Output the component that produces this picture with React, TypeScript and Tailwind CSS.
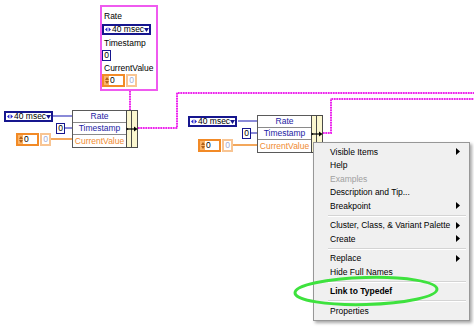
import React from "react";

const font = { fontFamily: '"Liberation Sans", Arial, sans-serif' };

function EnumConst() {
  return (
    <div className="flex h-[11px] w-[49px] items-center border-2 border-[#16168e] bg-white">
      <svg width="6" height="5" viewBox="0 0 6 5" className="ml-[1px] shrink-0">
        <path d="M0 2.5 L2.4 0.3 L2.4 4.7 Z M6 2.5 L3.6 0.3 L3.6 4.7 Z" fill="#2a2ad0" />
      </svg>
      <span className="ml-[1px] whitespace-nowrap text-[8.5px] leading-none text-black">40 msec</span>
      <svg width="5" height="4" viewBox="0 0 5 4" className="ml-auto mr-[1px] shrink-0">
        <path d="M0 0 H5 L2.5 4 Z" fill="#16168e" />
      </svg>
    </div>
  );
}

function ZeroConst() {
  return (
    <div className="flex h-[11px] w-[9px] items-center justify-center border-[1.5px] border-[#16168e] bg-white text-[8.5px] leading-none text-black">
      0
    </div>
  );
}

function OrangeNumeric() {
  return (
    <div className="flex items-center gap-[1px]">
      <div className="flex h-[13px] w-[23px] border-2 border-[#f28a26] bg-white">
        <div className="flex w-[5px] flex-col items-center justify-center gap-[1px] bg-[#fbb468]">
          <svg width="4" height="3" viewBox="0 0 4 3">
            <path d="M0 3 L2 0 L4 3 Z" fill="#b0601a" />
          </svg>
          <svg width="4" height="3" viewBox="0 0 4 3">
            <path d="M0 0 L2 3 L4 0 Z" fill="#b0601a" />
          </svg>
        </div>
        <div className="flex flex-1 items-center pl-[1px] text-[8.5px] leading-none text-black">0</div>
      </div>
      <div className="flex h-[13px] w-[11px] items-center justify-center border-2 border-[#f8c492] bg-white text-[8.5px] leading-none text-[#a4acd6]">
        0
      </div>
    </div>
  );
}

function Bundle({ left, top }: { left: number; top: number }) {
  const rows = [
    { label: "Rate", color: "text-[#1c1ca4]" },
    { label: "Timestamp", color: "text-[#1c1ca4]" },
    { label: "CurrentValue", color: "text-[#f08a30]" },
  ];
  return (
    <div className="absolute flex" style={{ left, top }}>
      <div className="flex w-[55px] flex-col border border-[#5a5a5a] bg-white">
        {rows.map((r, i) => (
          <div
            key={r.label}
            className={`flex h-[12px] items-center justify-center text-[8.5px] leading-none ${r.color} ${
              i < 2 ? "border-b border-[#8a8a8a]" : ""
            }`}
          >
            {r.label}
          </div>
        ))}
      </div>
      <div className="relative -ml-[1px] flex h-[38px] w-[12px] border border-[#4a4a4a] bg-[#fbf7cf]">
        <div className="ml-[4px] h-full w-[1px] bg-[#4a4a4a]" />
        <svg width="12" height="6" viewBox="0 0 12 6" className="absolute left-[-1px] top-[15px]">
          <path d="M1 3 H9" stroke="#000" strokeWidth="1.2" />
          <path d="M8 0.5 L11.5 3 L8 5.5 Z" fill="#000" />
          <path d="M0.5 1.5 L2.5 3 L0.5 4.5 Z" fill="#000" />
        </svg>
      </div>
    </div>
  );
}

function MenuItem({ label, arrow, disabled, bold }: { label: string; arrow?: boolean; disabled?: boolean; bold?: boolean }) {
  return (
    <div
      className={`flex h-[13.5px] items-center pl-[16px] pr-[9px] text-[8.5px] leading-none ${
        disabled ? "text-[#a0a0a0]" : "text-black"
      } ${bold ? "font-bold" : ""}`}
    >
      <span>{label}</span>
      {arrow && (
        <svg width="4" height="7" viewBox="0 0 4 7" className="ml-auto">
          <path d="M0 0 L4 3.5 L0 7 Z" fill="#000" />
        </svg>
      )}
    </div>
  );
}

function Sep() {
  return (
    <div className="flex h-[6px] items-center pl-[14px] pr-[3px]">
      <div className="h-[2px] w-full border-t border-[#d4d4d4] bg-white" />
    </div>
  );
}

export default function App() {
  return (
    <div className="relative h-[327px] w-[474px] overflow-hidden bg-white" style={font}>
      {/* wires */}
      <svg width="474" height="327" className="absolute left-0 top-0">
        <g fill="none" strokeWidth="2">
          <path d="M130 91 V110 M138 128 H177 V93 H474 M323 133 H331 V99 H474" stroke="#f7b8f7" />
          <path d="M130 91 V110 M138 128 H177 V93 H474 M323 133 H331 V99 H474" stroke="#ee22ee" strokeDasharray="1.5 1" />
        </g>
        <g fill="none" strokeWidth="1.5">
          <path d="M53 116 H72 M64 128 H72 M238 121 H257 M250 133 H257" stroke="#6464cc" />
          <path d="M51 139 H72 M233 145 H257" stroke="#f08a26" />
        </g>
      </svg>

      {/* cluster constant */}
      <div className="absolute left-[100px] top-[5px] flex h-[86px] w-[58px] flex-col border-2 border-[#ef5aef] pt-[3px]">
        <div className="ml-[2px] h-[12px] text-[8.5px] leading-[12px] text-black">Rate</div>
        <div className="mt-[2px]">
          <EnumConst />
        </div>
        <div className="ml-[2px] mt-[2px] h-[12px] text-[8.5px] leading-[12px] text-black">Timestamp</div>
        <div className="mt-[1px]">
          <ZeroConst />
        </div>
        <div className="ml-[2px] mt-[1px] h-[12px] text-[8.5px] leading-[12px] text-black">CurrentValue</div>
        <OrangeNumeric />
      </div>

      {/* left group */}
      <div className="absolute left-[4px] top-[111px]">
        <EnumConst />
      </div>
      <div className="absolute left-[56px] top-[123px]">
        <ZeroConst />
      </div>
      <div className="absolute left-[16px] top-[133px]">
        <OrangeNumeric />
      </div>
      <Bundle left={72} top={110} />

      {/* right group */}
      <div className="absolute left-[188px] top-[116px]">
        <EnumConst />
      </div>
      <div className="absolute left-[242px] top-[128px]">
        <ZeroConst />
      </div>
      <div className="absolute left-[198px] top-[139px]">
        <OrangeNumeric />
      </div>
      <Bundle left={257} top={115} />

      {/* context menu */}
      <div className="absolute left-[313px] top-[142px] flex w-[157px] flex-col border border-[#979797] bg-[#f0f0f0] py-[2px] shadow-[2px_2px_3px_rgba(0,0,0,0.35)]">
        <MenuItem label="Visible Items" arrow />
        <MenuItem label="Help" />
        <MenuItem label="Examples" disabled />
        <MenuItem label="Description and Tip..." />
        <MenuItem label="Breakpoint" arrow />
        <Sep />
        <MenuItem label="Cluster, Class, & Variant Palette" arrow />
        <MenuItem label="Create" arrow />
        <Sep />
        <MenuItem label="Replace" arrow />
        <MenuItem label="Hide Full Names" />
        <Sep />
        <MenuItem label="Link to Typedef" bold />
        <Sep />
        <MenuItem label="Properties" />
      </div>

      {/* highlight */}
      <svg width="474" height="327" className="pointer-events-none absolute left-0 top-0">
        <ellipse cx="366" cy="291" rx="71" ry="13.5" fill="none" stroke="#3ee23e" strokeWidth="3" transform="rotate(-1.5 366 291)" />
      </svg>
    </div>
  );
}
